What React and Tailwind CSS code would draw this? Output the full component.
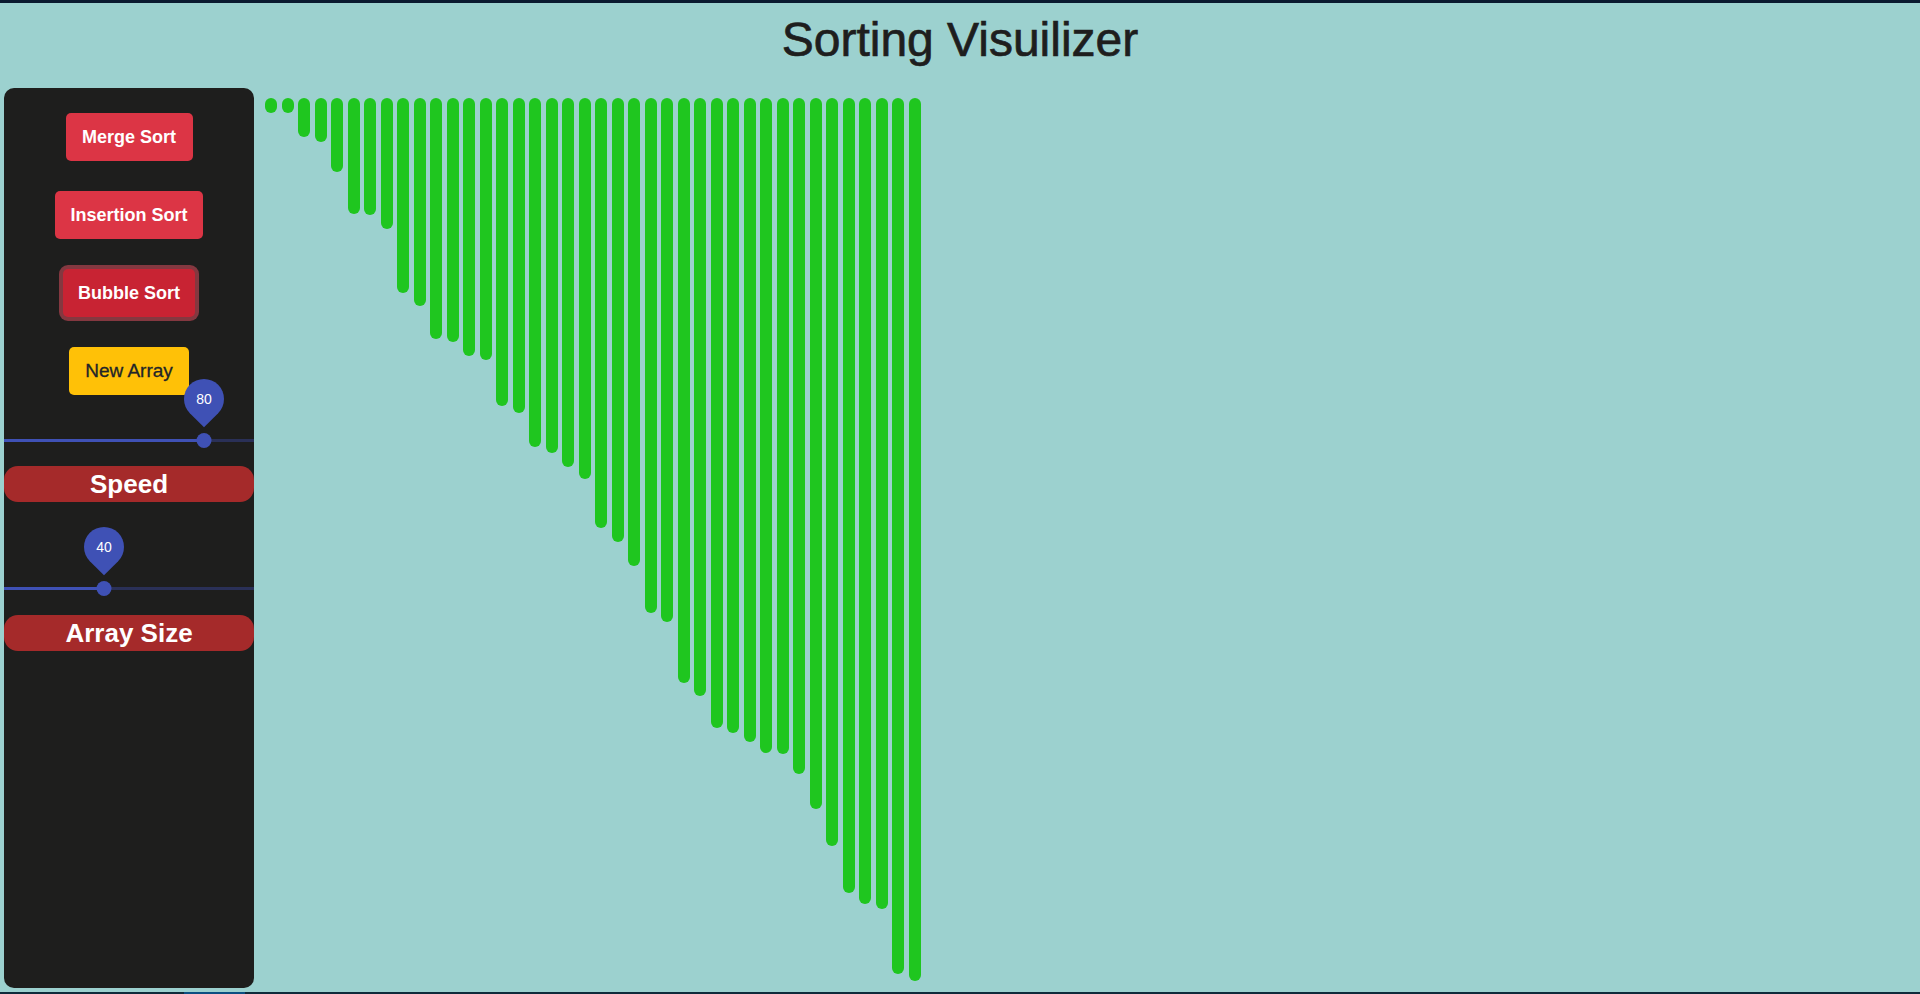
import React from "react";

const HEIGHTS = [15, 15, 39, 44, 74, 116, 117, 131, 195, 208, 241, 244, 258, 262, 308, 315, 349, 355, 369, 381, 430, 444, 468, 515, 524, 585, 598, 630, 635, 644, 655, 656, 676, 711, 748, 795, 806, 811, 876, 883];

function Slider({ value, max = 100 }) {
  const pct = (value / max) * 100;
  return (
    <div className="relative h-[15px] w-full">
      <div className="absolute left-0 right-0 top-[6px] h-[3px] bg-[#2a3057]" />
      <div className="absolute left-0 top-[6px] h-[3px] bg-[#3f51b5]" style={{ width: pct + "%" }} />
      <div
        className="absolute top-0 h-[15px] w-[15px] -translate-x-1/2 rounded-full bg-[#3f51b5]"
        style={{ left: pct + "%" }}
      />
      <div
        className="absolute top-[-54px] h-[40px] w-[40px] -translate-x-1/2"
        style={{ left: pct + "%" }}
      >
        <div className="absolute inset-0 rotate-45 rounded-[50%_50%_0_50%] bg-[#3f51b5]" />
        <div className="relative flex h-full w-full items-center justify-center text-[14px] text-white [font-family:'Liberation_Sans',Arial,sans-serif]">
          {value}
        </div>
      </div>
    </div>
  );
}

export default function App() {
  return (
    <div className="flex h-[994px] w-full flex-col overflow-hidden bg-[#9cd1cf] [font-family:'Liberation_Sans',Arial,sans-serif]">
      <div className="h-[3px] w-full bg-[#0a1a30]" />
      <div className="h-[85px] pt-[13px] text-center text-[48px] leading-none text-[#1e1e1e] [-webkit-text-stroke:0.7px_#1e1e1e]">
        Sorting Visuilizer
      </div>
      <div className="flex h-[900px]">
        <div className="ml-[4px] flex h-[900px] w-[250px] flex-col items-center rounded-[10px] bg-[#1e1e1d]">
          <div className="flex flex-col items-center gap-[30px] pt-[25px]">
            <button className="flex h-[48px] w-[127px] items-center justify-center rounded-[5px] bg-[#dc3545] text-[18px] font-bold text-white">
              Merge Sort
            </button>
            <button className="flex h-[48px] w-[148px] items-center justify-center rounded-[5px] bg-[#dc3545] text-[18px] font-bold text-white">
              Insertion Sort
            </button>
            <button className="flex h-[48px] w-[132px] items-center justify-center rounded-[5px] bg-[#c82333] text-[18px] font-bold text-white shadow-[0_0_0_4px_#843840]">
              Bubble Sort
            </button>
            <button className="flex h-[48px] w-[120px] items-center justify-center rounded-[5px] bg-[#ffc107] text-[19px] text-[#212529] [-webkit-text-stroke:0.3px_#212529]">
              New Array
            </button>
          </div>
          <div className="mt-[38px] w-full">
            <Slider value={80} />
          </div>
          <div className="mt-[18px] flex h-[36px] w-full items-center justify-center rounded-[14px] bg-[#a52a2a] text-[26px] font-bold text-white">
            Speed
          </div>
          <div className="mt-[79px] w-full">
            <Slider value={40} />
          </div>
          <div className="mt-[19px] flex h-[36px] w-full items-center justify-center rounded-[14px] bg-[#a52a2a] text-[26px] font-bold text-white">
            Array Size
          </div>
        </div>
        <div className="ml-[11px] mt-[10px] flex items-start gap-[4.5px]">
          {HEIGHTS.map((h, i) => (
            <div key={i} className="w-[12px] rounded-full bg-[#1fc61f]" style={{ height: h + "px" }} />
          ))}
        </div>
      </div>
      <div className="h-[4px]" />
      <div className="flex h-[2px] w-full bg-[#0f2b3b]">
        <div className="ml-[184px] h-[2px] w-[61px] bg-[#0c4f82]" />
      </div>
    </div>
  );
}
